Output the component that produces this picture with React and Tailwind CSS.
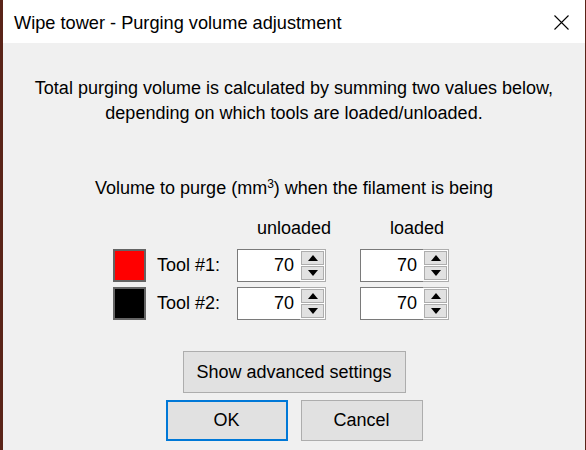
import React from 'react';

function SpinBox({ value }) {
  return (
    <div className="flex h-[33px] w-[89px]">
      <div className="flex-1 bg-white border border-[#7a7a7a] border-r-0 flex items-center justify-end pr-[6px]">
        {value}
      </div>
      <div className="w-[26px] flex flex-col border border-[#adadad] border-l-0 bg-white p-px gap-px">
        <button className="flex-1 bg-[#e1e1e1] border border-[#adadad] flex items-center justify-center">
          <svg width="10" height="6" viewBox="0 0 10 6">
            <path d="M0 6 L5 0 L10 6 Z" fill="#000" />
          </svg>
        </button>
        <button className="flex-1 bg-[#e1e1e1] border border-[#adadad] flex items-center justify-center">
          <svg width="10" height="6" viewBox="0 0 10 6">
            <path d="M0 0 L10 0 L5 6 Z" fill="#000" />
          </svg>
        </button>
      </div>
    </div>
  );
}

function ToolRow({ color, label }) {
  return (
    <div className="flex items-center h-[33px]">
      <div className={`w-[33px] h-[33px] border-2 border-[#646464] ${color}`} />
      <span className="ml-[11px] w-[80px]">{label}</span>
      <SpinBox value="70" />
      <div className="w-[34px]" />
      <SpinBox value="70" />
    </div>
  );
}

export default function App() {
  return (
    <div
      className="w-[586px] h-[450px] flex bg-[#5a2418] text-[18px] text-black overflow-hidden"
      style={{ fontFamily: '"Liberation Sans", Arial, sans-serif' }}
    >
      <div className="w-[3px] shrink-0" />
      <div className="flex-1 flex flex-col mr-px bg-[#f0f0f0]">
        {/* Title bar */}
        <div className="h-[43px] bg-white flex items-center justify-between pl-[11px] pr-[16px]">
          <span className="text-[18.2px] mt-[5px]">Wipe tower - Purging volume adjustment</span>
          <svg width="15" height="15" viewBox="0 0 15 15" className="mt-[2px]">
            <path d="M0.5 0.5 L14.5 14.5 M14.5 0.5 L0.5 14.5" stroke="#000" strokeWidth="1.1" />
          </svg>
        </div>

        {/* Body */}
        <div className="flex flex-col items-center pt-[33px] leading-[25px]">
          <p className="text-center">
            Total purging volume is calculated by summing two values below,
            <br />
            depending on which tools are loaded/unloaded.
          </p>
          <p className="mt-[50px]">
            Volume to purge (mm<sup className="text-[12px]">3</sup>) when the filament is being
          </p>
        </div>

        <div className="flex flex-col pl-[110px] mt-[15px]">
          <div className="flex h-[25px] items-center">
            <span className="ml-[144px]">unloaded</span>
            <span className="ml-[59px]">loaded</span>
          </div>
          <div className="flex flex-col gap-[5px] mt-[8px]">
            <ToolRow color="bg-[#ff0000]" label="Tool #1:" />
            <ToolRow color="bg-black" label="Tool #2:" />
          </div>
        </div>

        <div className="flex flex-col items-center mt-[31px]">
          <button className="w-[223px] h-[42px] bg-[#e1e1e1] border border-[#adadad]">
            Show advanced settings
          </button>
          <div className="flex gap-[13px] mt-[7px]">
            <button className="w-[122px] h-[41px] bg-[#e1e1e1] border-2 border-[#0078d7]">OK</button>
            <button className="w-[122px] h-[41px] bg-[#e1e1e1] border border-[#adadad]">Cancel</button>
          </div>
        </div>
      </div>
    </div>
  );
}
